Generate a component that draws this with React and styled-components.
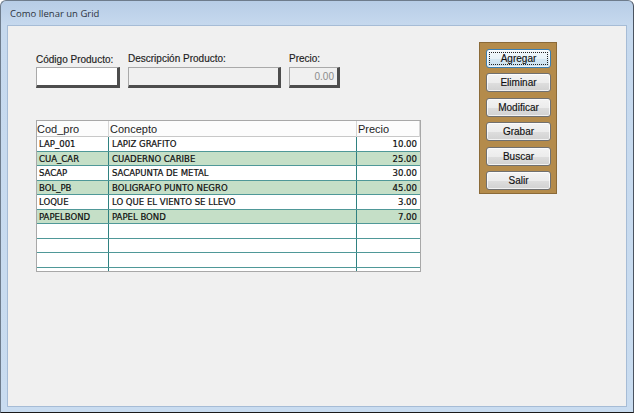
import React from "react";
import styled, { createGlobalStyle } from "styled-components";

const GlobalStyle = createGlobalStyle`
  html, body {
    margin: 0;
    padding: 0;
    background: #ffffff;
  }
  * {
    box-sizing: border-box;
  }
`

const Window = styled.div`
  width: 634px;
  height: 413px;
  display: flex;
  flex-direction: column;
  background: linear-gradient(180deg, #b7cde6 0px, #c6d9ee 24px, #c9dcf0 100%);
  border: 1px solid #6e7c8c;
  border-bottom-color: #1a1a1a;
  border-right-color: #4a5360;
  border-radius: 6px 6px 0 0;
  padding: 0 6px 5px 6px;
`

const TitleBar = styled.div`
  height: 24px;
  display: flex;
  align-items: center;
  padding-left: 3px;
  font-family: "Open Sans", "Noto Sans", sans-serif;
  font-size: 9.5px;
  color: #2c3340;
`

const Client = styled.div`
  flex: 1;
  display: flex;
  align-items: flex-start;
  background: #f0f0f0;
  border: 1px solid #a6bcd6;
  padding: 16px 0 0 28px;
  font-family: "Liberation Sans", Arial, sans-serif;
`

const LeftColumn = styled.div`
  width: 385px;
  margin-top: 11px;
  display: flex;
  flex-direction: column;
`

const Fields = styled.div`
  display: flex;
  gap: 8px;
`

const Field = styled.div`
  width: ${p => p.$width}px;
  display: flex;
  flex-direction: column;
`

const Label = styled.label`
  height: 14px;
  font-size: 10px;
  line-height: ${p => (p.$raised ? "11px" : "14px")};
  color: #1c1c1c;
  white-space: nowrap;
  -webkit-text-stroke: 0.15px #1c1c1c;
`

const TextBox = styled.div`
  height: 21px;
  background: ${p => (p.$disabled ? "#f0f0f0" : "#ffffff")};
  border-style: solid;
  border-width: 1px 3px 3px 1px;
  border-color: #a9a9a9 #4d4d4d #4d4d4d #a9a9a9;
  font-size: 10px;
  color: #8c8c8c;
  display: flex;
  align-items: center;
  justify-content: flex-end;
  padding-right: 3px;
`

const Grid = styled.div`
  margin-top: 32px;
  height: 152px;
  background: #ffffff;
  border: 1px solid #a8a8a8;
  overflow: hidden;
`

const HeaderRow = styled.div`
  display: grid;
  grid-template-columns: 72px 248px 1fr;
  height: 16px;
  border-bottom: 1px solid #c8c8c8;
  background: #fcfcfc;
`

const HeaderCell = styled.div`
  font-size: 11px;
  line-height: 16px;
  color: #1e1e1e;
  padding-left: ${p => (p.$first ? "0px" : "1px")};
  border-right: 1px solid #d6d6d6;
  white-space: nowrap;
`

const DataRow = styled.div`
  display: grid;
  grid-template-columns: 72px 248px 1fr;
  height: 14.5px;
  background: ${p => (p.$shaded ? "#c5dfc7" : "#ffffff")};
  border-bottom: 1px solid #4f9898;
`

const Cell = styled.div`
  font-family: "Liberation Sans Narrow", "DejaVu Sans Condensed", "Liberation Sans", sans-serif;
  font-size: 9.5px;
  line-height: 13.5px;
  color: #0e0e0e;
  padding: 0 3px 0 ${p => (p.$first ? "2px" : "3px")};
  text-align: ${p => (p.$right ? "right" : "left")};
  border-right: ${p => (p.$last ? "none" : "1px solid #2f8181")};
  white-space: nowrap;
  overflow: hidden;
  -webkit-text-stroke: 0.2px #0e0e0e;
`

const Panel = styled.div`
  margin-left: 58px;
  width: 78px;
  background: #b48b4b;
  border: 1px solid #8b6a38;
  padding: 6px 5px 3px 6px;
  display: flex;
  flex-direction: column;
  gap: 5.4px;
`

const Button = styled.button`
  position: relative;
  width: 65px;
  height: 19px;
  padding: 0;
  border: 1px solid ${p => (p.$focused ? "#3c7fb1" : "#707070")};
  border-radius: 3px;
  background: ${p =>
    p.$focused
      ? "linear-gradient(180deg, #f4f9fc 0%, #e8f2f8 50%, #d6e8f3 51%, #c9e0ef 100%)"
      : "linear-gradient(180deg, #f3f3f3 0%, #ececec 50%, #dedede 51%, #d1d1d1 100%)"};
  box-shadow: inset 0 0 0 1px rgba(255, 255, 255, 0.7);
  font-family: "Liberation Sans", Arial, sans-serif;
  font-size: 10px;
  color: #111111;
  -webkit-text-stroke: 0.15px #111111;

  &::after {
    content: "";
    display: ${p => (p.$focused ? "block" : "none")};
    position: absolute;
    inset: 2px;
    border: 1px dotted #222222;
  }
`

const products = [
  { code: "LAP_001", name: "LAPIZ GRAFITO", price: "10.00" },
  { code: "CUA_CAR", name: "CUADERNO CARIBE", price: "25.00" },
  { code: "SACAP", name: "SACAPUNTA DE METAL", price: "30.00" },
  { code: "BOL_PB", name: "BOLIGRAFO PUNTO NEGRO", price: "45.00" },
  { code: "LOQUE", name: "LO QUE EL VIENTO SE LLEVO", price: "3.00" },
  { code: "PAPELBOND", name: "PAPEL BOND", price: "7.00" },
]

const actions = ["Agregar", "Eliminar", "Modificar", "Grabar", "Buscar", "Salir"]

function App() {
  const emptyRows = [0, 1, 2, 3, 4]

  return (
    <>
      <GlobalStyle />
      <Window>
        <TitleBar>Como llenar un Grid</TitleBar>
        <Client>
          <LeftColumn>
            <Fields>
              <Field $width={84}>
                <Label>Código Producto:</Label>
                <TextBox />
              </Field>
              <Field $width={153}>
                <Label $raised>Descripción Producto:</Label>
                <TextBox $disabled />
              </Field>
              <Field $width={51}>
                <Label $raised>Precio:</Label>
                <TextBox $disabled>0.00</TextBox>
              </Field>
            </Fields>

            <Grid>
              <HeaderRow>
                <HeaderCell $first>Cod_pro</HeaderCell>
                <HeaderCell>Concepto</HeaderCell>
                <HeaderCell>Precio</HeaderCell>
              </HeaderRow>
              {products.map((p, i) => (
                <DataRow key={p.code} $shaded={i % 2 === 1}>
                  <Cell $first>{p.code}</Cell>
                  <Cell>{p.name}</Cell>
                  <Cell $right $last>{p.price}</Cell>
                </DataRow>
              ))}
              {emptyRows.map(n => (
                <DataRow key={"empty" + n}>
                  <Cell $first />
                  <Cell />
                  <Cell $last />
                </DataRow>
              ))}
            </Grid>
          </LeftColumn>

          <Panel>
            {actions.map((a, i) => (
              <Button key={a} $focused={i === 0}>{a}</Button>
            ))}
          </Panel>
        </Client>
      </Window>
    </>
  )
}

export default App;
